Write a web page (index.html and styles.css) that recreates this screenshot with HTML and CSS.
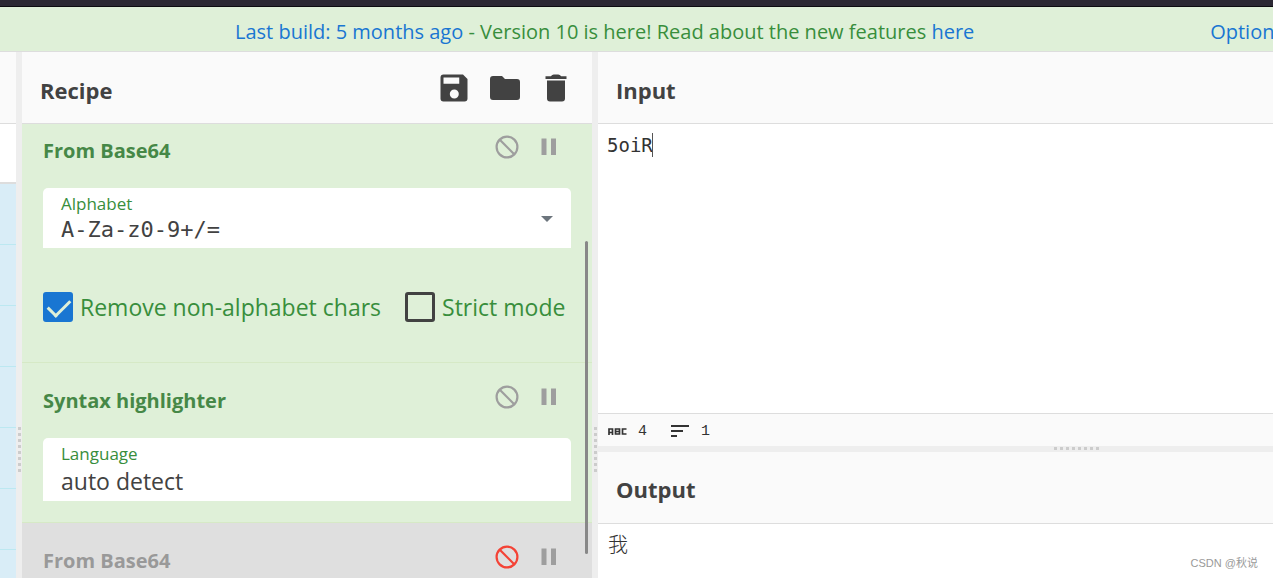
FILE: index.html
```html
<!DOCTYPE html>
<html lang="en">
<head>
    <meta charset="UTF-8">
    <meta name="viewport" content="width=device-width, initial-scale=1.0">
    <title>CyberChef</title>
    <link rel="stylesheet" href="styles.css">
</head>
<body>
    <svg class="sprite" aria-hidden="true">
      <symbol id="ban" viewBox="0 0 24 24">
        <circle cx="12" cy="12" r="10.4" fill="none" stroke="currentColor" stroke-width="2.2"/>
        <path d="M4.8 4.8l14.4 14.4" stroke="currentColor" stroke-width="2.2"/>
      </symbol>
      <symbol id="pause" viewBox="0 0 24 24">
        <path d="M4.5 3.5h5v16.5h-5zM14 3.5h5v16.5h-5z" fill="currentColor"/>
      </symbol>
    </svg>

    <div class="browser-edge"></div>
    <div class="banner">
      <p class="notice"><a href="#">Last build: 5 months ago</a> - Version 10 is here! Read about the new features <a href="#">here</a></p>
      <a class="options" href="#">Options</a>
    </div>

    <div class="workspace">
      <div class="operations">
        <div class="title"></div>
        <div class="search"></div>
        <div class="category"></div>
        <div class="category"></div>
        <div class="category"></div>
        <div class="category"></div>
        <div class="category"></div>
        <div class="category"></div>
        <div class="category"></div>
      </div>
      <div class="gutter"><div class="grip"></div></div>

      <div class="recipe">
        <div class="title">
          <h2>Recipe</h2>
          <div class="controls">
            <button type="button" aria-label="Save recipe">
              <svg viewBox="0 0 24 24"><path fill="currentColor" fill-rule="evenodd" d="M18 3H5a2 2 0 0 0-2 2v14a2 2 0 0 0 2 2h14a2 2 0 0 0 2-2V6zM5 5h10.5v4.2H5zM12.2 13a3 3 0 1 1 0 6 3 3 0 0 1 0-6z"/></svg>
            </button>
            <button type="button" aria-label="Load recipe">
              <svg viewBox="0 0 24 24"><path fill="currentColor" d="M10 4H4a2 2 0 0 0-2 2v12a2 2 0 0 0 2 2h16a2 2 0 0 0 2-2V8a2 2 0 0 0-2-2h-8z"/></svg>
            </button>
            <button type="button" aria-label="Clear recipe">
              <svg viewBox="0 0 24 24"><path fill="currentColor" d="M6 7h12v12a2 2 0 0 1-2 2H8a2 2 0 0 1-2-2zM19 4.2V6H5V4.200h3.500Q9.500 3 10.500 3h3q1 0 2 1.200z"/></svg>
            </button>
          </div>
        </div>
        <div class="rec-body">
          <div class="rec-list">
            <div class="operation">
              <div class="op-head">
                <h3>From Base64</h3>
                <button type="button" aria-label="Disable operation"><svg><use href="#ban"/></svg></button>
                <button type="button" aria-label="Set breakpoint"><svg><use href="#pause"/></svg></button>
              </div>
              <div class="field">
                <label for="alphabet">Alphabet</label>
                <select id="alphabet" class="mono">
                  <option>A-Za-z0-9+/=</option>
                </select>
                <span class="arrow"></span>
              </div>
              <div class="checks">
                <label><input type="checkbox" checked>Remove non-alphabet chars</label>
                <label><input type="checkbox">Strict mode</label>
              </div>
            </div>
            <div class="operation">
              <div class="op-head">
                <h3>Syntax highlighter</h3>
                <button type="button" aria-label="Disable operation"><svg><use href="#ban"/></svg></button>
                <button type="button" aria-label="Set breakpoint"><svg><use href="#pause"/></svg></button>
              </div>
              <div class="field">
                <label for="language">Language</label>
                <input id="language" type="text" value="auto detect">
              </div>
            </div>
            <div class="operation disabled">
              <div class="op-head">
                <h3>From Base64</h3>
                <button type="button" class="off" aria-label="Enable operation"><svg><use href="#ban"/></svg></button>
                <button type="button" aria-label="Set breakpoint"><svg><use href="#pause"/></svg></button>
              </div>
            </div>
          </div>
          <div class="scroll-thumb"></div>
        </div>
      </div>
      <div class="gutter"><div class="grip"></div></div>

      <div class="io">
        <div class="input-pane">
          <div class="title"><h2>Input</h2></div>
          <div class="editor">
            <textarea aria-label="Input" spellcheck="false">5oiR</textarea>
            <span class="caret"></span>
          </div>
          <div class="status">
            <svg class="abc" viewBox="0 0 19 7" fill="none" stroke="currentColor" stroke-width="1.7"><path d="M1 7V1h3.500v6M1 4.500h3.500M7.500 1h4v5h-4zM7.500 3.500h4M18.500 1h-4v5h4"/></svg>
            <span>4</span>
            <svg class="lines" viewBox="0 0 18 12"><path fill="currentColor" d="M0 0h18v2H0zM0 5h12v2H0zM0 10h6v2H0z"/></svg>
            <span>1</span>
          </div>
        </div>
        <div class="gutter row"><div class="grip"></div></div>
        <div class="output-pane">
          <div class="title"><h2>Output</h2></div>
          <div class="output">我</div>
          <div class="watermark">CSDN @秋说</div>
        </div>
      </div>
    </div>
</body>
</html>
```
FILE: styles.css
```css
* {
  box-sizing: border-box;
}

body {
  margin: 0;
  height: 100vh;
  display: flex;
  flex-direction: column;
  overflow: hidden;
  font-family: "Open Sans", "Noto Sans", sans-serif;
  color: #424242;
  background-color: #fff;
}

h2, h3, p {
  margin: 0;
}

a {
  color: #1976d2;
  text-decoration: none;
}

button {
  display: flex;
  padding: 0;
  border: 0;
  background: none;
  color: inherit;
  cursor: pointer;
}

.sprite {
  display: none;
}

.browser-edge {
  flex: none;
  height: 7px;
  background-color: #2b2833;
  border-bottom: 1px solid #0c0b10;
}

.banner {
  flex: none;
  display: flex;
  align-items: center;
  height: 45px;
  padding-left: 235px;
  padding-top: 5px;
  font-size: 20px;
  line-height: 28px;
  white-space: nowrap;
  color: #388e3c;
  background-color: #dff0d8;
  border-bottom: 1px solid #ddd;
}

.options {
  margin-left: auto;
  margin-right: -11px;
}

.workspace {
  flex: 1;
  min-height: 0;
  display: grid;
  grid-template-columns: 16px 6px minmax(0, 38fr) 6px minmax(0, 45fr);
  grid-template-rows: minmax(0, 1fr);
}

.title {
  flex: none;
  display: flex;
  align-items: center;
  justify-content: space-between;
  height: 72px;
  padding: 4px 18px 0 18px;
  background-color: #fafafa;
  border-bottom: 1px solid #ddd;
}

h2 {
  font-size: 22px;
  line-height: 32px;
}

.operations {
  overflow: hidden;
}

.search {
  height: 60px;
  border-bottom: 2px solid #ddd;
}

.category {
  height: 61px;
  background-color: #d9edf7;
  border-bottom: 1px solid #bce8f1;
}

.gutter {
  padding: 375px 1px 0 2px;
  background-color: #eee;
}

.grip {
  width: 3px;
  height: 45px;
  background: repeating-linear-gradient(to bottom, #ccc 0 3px, transparent 3px 6px);
}

.gutter.row {
  flex: none;
  display: flex;
  justify-content: flex-end;
  height: 6px;
  padding: 1px 174px 0 0;
}

.row .grip {
  width: 45px;
  height: 3px;
  background: repeating-linear-gradient(to right, #ccc 0 3px, transparent 3px 6px);
}

.recipe {
  display: flex;
  flex-direction: column;
}

.controls {
  display: flex;
  gap: 15px;
  padding-bottom: 4px;
}

.controls svg {
  width: 36px;
  height: 36px;
}

.rec-body {
  position: relative;
  flex: 1;
  min-height: 0;
  overflow: hidden;
}

/* list is scrolled down a little */
.rec-list {
  margin-top: -11px;
}

.operation {
  padding: 22px 21px 21px 21px;
  color: #468847;
  background-color: #dff0d8;
  border-bottom: 1px solid #d6e9c6;
}

.op-head {
  display: flex;
  align-items: flex-start;
  gap: 18px;
  height: 53px;
  padding-right: 10px;
}

.op-head h3 {
  flex: 1;
  font-size: 20px;
  line-height: 32px;
}

.op-head button {
  color: #9e9e9e;
}

.op-head svg {
  width: 24px;
  height: 24px;
}

.op-head .off {
  color: #f44336;
}

.field {
  position: relative;
  padding: 6px 18px 3px 18px;
  background-color: #fff;
  border-radius: 5px 5px 0 0;
}

.field label {
  display: block;
  font-size: 17px;
  line-height: 20px;
  color: #388e3c;
}

.field select, .field input {
  display: block;
  width: 100%;
  height: 34px;
  padding: 0;
  border: 0;
  outline: 0;
  appearance: none;
  background: none;
  font-family: inherit;
  font-size: 23px;
  color: #424242;
}

.field .mono {
  height: 31px;
  font-family: "DejaVu Sans Mono", monospace;
  font-size: 22px;
}

.arrow {
  position: absolute;
  right: 18px;
  top: 28px;
  border: 6px solid transparent;
  border-top-color: #6c757d;
  border-bottom: 0;
  pointer-events: none;
}

.checks {
  display: flex;
  gap: 24px;
  padding: 43px 0 18px;
  white-space: nowrap;
}

.checks label {
  display: flex;
  align-items: center;
  gap: 7px;
  font-size: 23px;
  line-height: 32px;
  color: #388e3c;
}

.checks input {
  flex: none;
  width: 30px;
  height: 30px;
  margin: 0;
  appearance: none;
  border: 3px solid #424242;
  border-radius: 3px;
}

.checks input:checked {
  border-color: #1976d2;
  background-color: #1976d2;
}

.checks input:checked::before {
  content: "";
  display: block;
  width: 19px;
  height: 10px;
  margin: 4px 0 0 2px;
  border-left: 3px solid #dff0d8;
  border-bottom: 3px solid #dff0d8;
  transform: rotate(-45deg);
}

.operation.disabled {
  height: 160px;
  color: #999;
  background-color: #dfdfdf;
}

.scroll-thumb {
  position: absolute;
  top: 117px;
  right: 4px;
  width: 3px;
  height: 313px;
  border-radius: 2px;
  background-color: #888;
}

.io {
  display: flex;
  flex-direction: column;
}

.input-pane, .output-pane {
  position: relative;
  flex: 25 1 0;
  min-height: 0;
  display: flex;
  flex-direction: column;
}

.output-pane {
  flex-grow: 8;
}

.editor {
  position: relative;
  flex: 1;
  min-height: 0;
}

.editor textarea {
  display: block;
  width: 100%;
  height: 100%;
  padding: 8px 9px;
  border: 0;
  outline: 0;
  resize: none;
  font-family: "DejaVu Sans Mono", monospace;
  font-size: 19px;
  line-height: 27px;
  color: #333;
}

.caret {
  position: absolute;
  left: 54px;
  top: 9px;
  width: 1px;
  height: 24px;
  background-color: #555;
}

.status {
  flex: none;
  display: flex;
  align-items: center;
  height: 33px;
  padding: 3px 10px 0 10px;
  font-family: "Liberation Mono", monospace;
  font-size: 15px;
  color: #333;
  background-color: #fafafa;
  border-top: 1px solid #ddd;
}

.status .abc {
  width: 19px;
  height: 7px;
  margin-right: 11px;
}

.status .lines {
  width: 18px;
  height: 12px;
  margin: 0 12px 0 24px;
}

.output {
  padding: 6px 10px;
  font-family: "Noto Sans CJK SC", sans-serif;
  font-weight: 300;
  font-size: 20px;
  line-height: 28px;
  color: #333;
}

.watermark {
  position: absolute;
  right: 15px;
  bottom: 6px;
  font-family: "Liberation Sans", "Noto Sans CJK SC", sans-serif;
  font-size: 11px;
  line-height: 18px;
  color: #999;
}
```
